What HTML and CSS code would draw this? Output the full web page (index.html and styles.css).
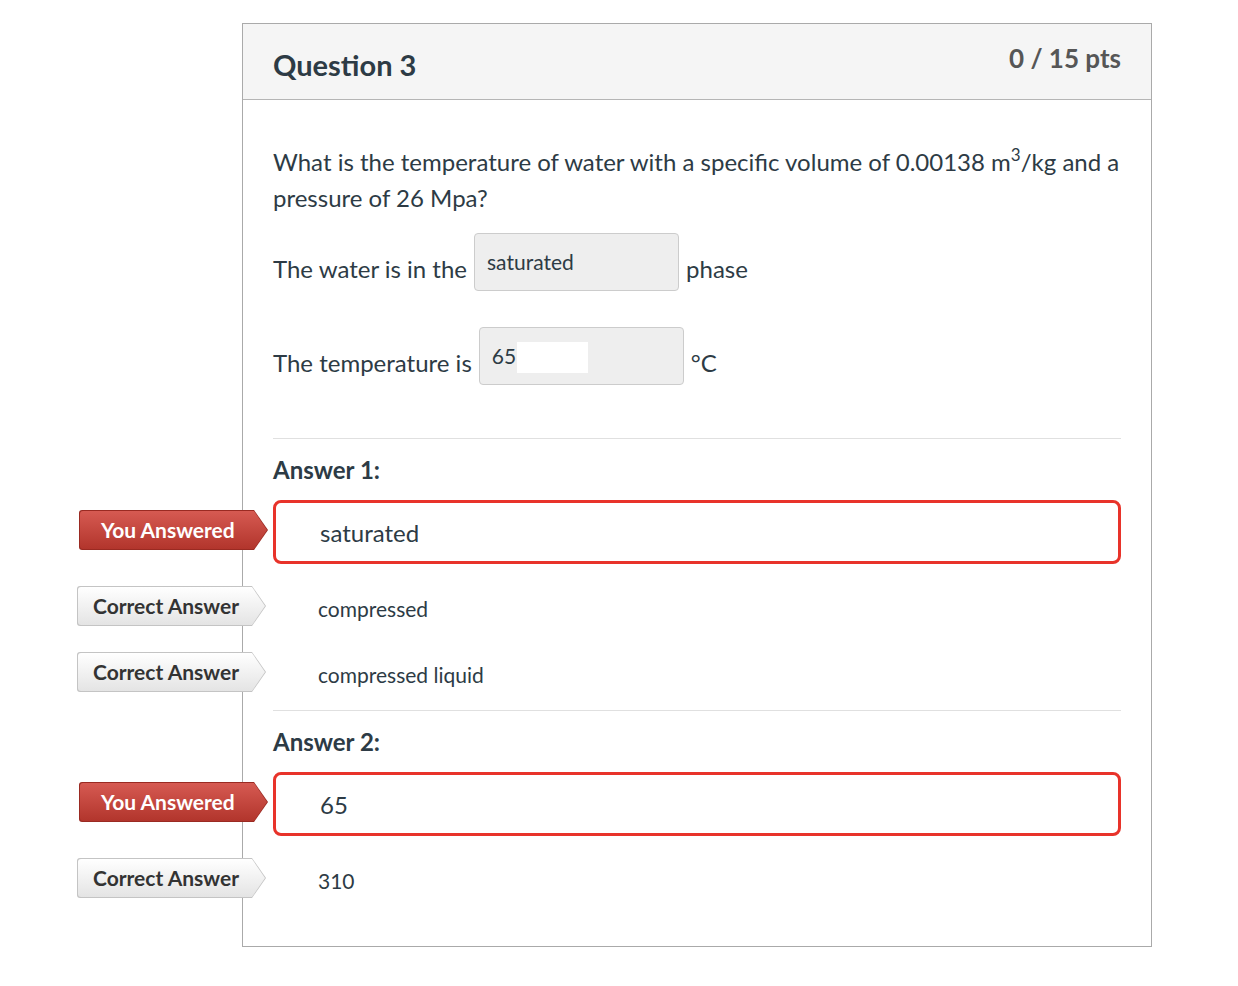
FILE: index.html
```html
<!DOCTYPE html>
<html lang="en">
<head>
<meta charset="utf-8">
<title>Question 3</title>
<link rel="stylesheet" href="styles.css">
</head>
<body>
<div class="card">
  <div class="card-header">
    <h2 class="title">Question 3</h2>
    <div class="pts">0 / 15 pts</div>
  </div>
  <div class="card-body">
    <p class="question">What is the temperature of water with a specific volume of 0.00138 m<sup>3</sup>/kg and a pressure of 26 Mpa?</p>
    <div class="blank-row">
      <span class="label">The water is in the</span>
      <span class="blank"><span class="blank-text">saturated</span></span>
      <span class="label">phase</span>
    </div>
    <div class="blank-row row-two">
      <span class="label">The temperature is</span>
      <span class="blank"><span class="blank-text">65</span><span class="redact"></span></span>
      <span class="label">°C</span>
    </div>

    <div class="answers">
      <h3 class="answer-head">Answer 1:</h3>
      <div class="answer-row you">
        <span class="badge badge-red"><span class="badge-inner">You Answered</span></span>
        <div class="answer-box">saturated</div>
      </div>
      <div class="answer-row correct">
        <span class="badge badge-light"><span class="badge-inner">Correct Answer</span></span>
        <div class="answer-text">compressed</div>
      </div>
      <div class="answer-row correct">
        <span class="badge badge-light"><span class="badge-inner">Correct Answer</span></span>
        <div class="answer-text">compressed liquid</div>
      </div>
    </div>

    <div class="answers answers-two">
      <h3 class="answer-head">Answer 2:</h3>
      <div class="answer-row you">
        <span class="badge badge-red"><span class="badge-inner">You Answered</span></span>
        <div class="answer-box">65</div>
      </div>
      <div class="answer-row correct">
        <span class="badge badge-light"><span class="badge-inner">Correct Answer</span></span>
        <div class="answer-text">310</div>
      </div>
    </div>
  </div>
</div>
</body>
</html>
```
FILE: styles.css
```css
* { box-sizing: border-box; }
html, body { margin: 0; padding: 0; background: #fff; }
body {
  font-family: Lato, "Open Sans", "Liberation Sans", sans-serif;
  color: #2d3b45;
  padding-top: 23px;
}
.card {
  margin-left: 242px;
  width: 910px;
  border: 1px solid #aaaaaa;
  background: #fff;
}
.card-header {
  height: 76px;
  background: #f5f5f5;
  border-bottom: 1px solid #b5b5b5;
  display: flex;
  justify-content: space-between;
  align-items: flex-start;
  padding: 0 30px;
}
.title {
  margin: 24px 0 0 0;
  font-size: 29px;
  line-height: 34px;
  font-weight: 700;
  color: #2d3b45;
}
.pts {
  margin-top: 17px;
  font-size: 26px;
  line-height: 34px;
  font-weight: 700;
  color: #565656;
}
.card-body {
  padding: 44px 30px 48px 30px;
}
.question {
  margin: 0;
  font-size: 24px;
  line-height: 36px;
}
.question sup {
  font-size: 17px;
  line-height: 0;
  vertical-align: 10px;
}
.blank-row {
  display: flex;
  align-items: center;
  gap: 7px;
  margin-top: 17px;
  font-size: 24px;
}
.row-two { margin-top: 36px; }
.label {
  padding-top: 13px;
  line-height: 30px;
}
.blank {
  width: 205px;
  height: 58px;
  background: #eeeeee;
  border: 1px solid #cccccc;
  border-radius: 4px;
  display: flex;
  align-items: center;
  padding: 0 0 0 12px;
  font-size: 21px;
  color: #2d3b45;
}
.blank-text { line-height: 24px; }
.redact {
  display: block;
  width: 71px;
  height: 31px;
  background: #ffffff;
  margin: 2px 0 0 1px;
}
.answers {
  margin-top: 53px;
  border-top: 1px solid #e0e0e0;
  padding-top: 16px;
}
.answers-two { margin-top: 18px; padding-top: 16px; }
.answer-head {
  margin: 0 0 15px 0;
  font-size: 24px;
  line-height: 30px;
  font-weight: 700;
}
.answer-row {
  position: relative;
}
.answer-row.correct {
  margin-top: 22px;
  height: 40px;
}
.answer-row.correct + .answer-row.correct { margin-top: 26px; }
.answer-box {
  height: 64px;
  border: 3px solid #e8332a;
  border-radius: 8px;
  display: flex;
  align-items: center;
  padding: 0 0 0 44px;
  font-size: 24px;
}
.answer-text {
  padding: 8px 0 0 45px;
  font-size: 21px;
  line-height: 30px;
}
.badge {
  position: absolute;
  width: 189px;
  height: 40px;
  padding: 1px;
  clip-path: polygon(0 0, calc(100% - 14px) 0, 100% 50%, calc(100% - 14px) 100%, 0 100%);
}
.badge-inner {
  display: flex;
  align-items: center;
  height: 100%;
  clip-path: polygon(0 0, calc(100% - 13px) 0, 100% 50%, calc(100% - 13px) 100%, 0 100%);
  font-size: 21px;
  font-weight: 700;
  padding-bottom: 2px;
  border-radius: 3px 0 0 3px;
}
.badge-red {
  left: -194px;
  top: 10px;
  background: #9a2a22;
  border-radius: 3px 0 0 3px;
}
.badge-red .badge-inner {
  background: linear-gradient(#d65a52, #b2352c);
  color: #fff;
  padding-left: 21px;
}
.badge-light {
  left: -196px;
  top: 0;
  background: #c4c4c4;
  border-radius: 3px 0 0 3px;
}
.badge-light .badge-inner {
  background: linear-gradient(#ffffff, #e4e4e4);
  color: #333333;
  padding-left: 15px;
}
```
